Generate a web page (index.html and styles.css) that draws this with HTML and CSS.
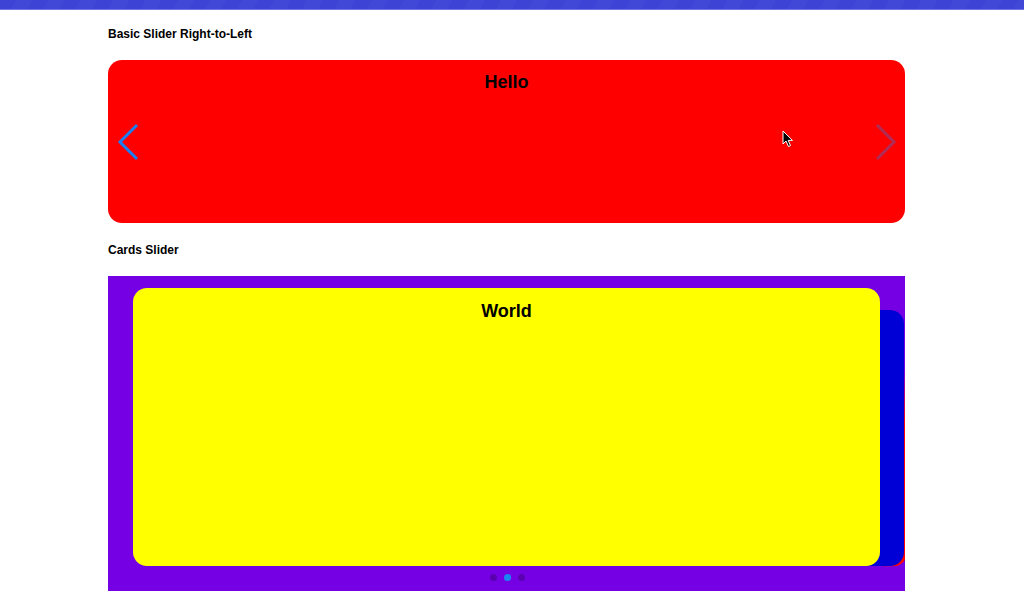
FILE: index.html
```html
<!DOCTYPE html>
<html>
<head>
<meta charset="utf-8">
<link rel="stylesheet" href="styles.css">
</head>
<body>
<div class="topbar"></div>
<main class="page">
  <h3 class="title">Basic Slider Right-to-Left</h3>
  <section class="slider basic">
    <h2 class="slide-text">Hello</h2>
    <svg class="arrow prev" width="24" height="40" viewBox="0 0 24 40"><polyline points="20,2 3,19 20,36" fill="none" stroke="#1a7ff2" stroke-width="3"/></svg>
    <svg class="arrow next" width="24" height="40" viewBox="0 0 24 40"><polyline points="3,2 20,19 3,36" fill="none" stroke="#1a7ff2" stroke-width="3"/></svg>
    <svg class="cursor" width="14" height="18" viewBox="0 0 14 18"><path d="M1,1 L1,14 L4,11 L6.5,16.5 L8.5,15.6 L6.2,10.4 L10.5,10.4 Z" fill="#000" stroke="#fff" stroke-width="1"/></svg>
  </section>
  <h3 class="title second">Cards Slider</h3>
  <section class="cards">
    <div class="card back red"></div>
    <div class="card back blue"></div>
    <div class="card front">
      <h2 class="slide-text">World</h2>
    </div>
    <div class="dots">
      <span class="dot"></span>
      <span class="dot active"></span>
      <span class="dot"></span>
    </div>
  </section>
</main>
</body>
</html>
```
FILE: styles.css
```css
html, body {
  margin: 0;
  padding: 0;
  background: #fff;
  font-family: "Liberation Sans", Arial, sans-serif;
  color: #000;
  overflow: hidden;
}
.topbar {
  height: 9px;
  border-bottom: 1px solid #7075e6;
  background: repeating-linear-gradient(120deg, #3c43d5 0, #3c43d5 14px, #4148d8 14px, #4148d8 28px);
}
.page {
  width: 797px;
  margin-left: 108px;
}
.title {
  margin: 16px 0 18px;
  font-size: 12px;
  line-height: 16px;
  font-weight: bold;
}
.title.second {
  margin: 19px 0 18px;
}
.slider {
  position: relative;
  height: 163px;
  background: #ff0000;
  border-radius: 14px;
  padding-top: 11px;
  box-sizing: border-box;
}
.slide-text {
  margin: 0;
  text-align: center;
  font-size: 18px;
  line-height: 22px;
  font-weight: bold;
}
.arrow {
  position: absolute;
  top: 63px;
}
.arrow.prev { left: 9px; }
.arrow.next { right: 7px; opacity: 0.35; }
.cursor {
  position: absolute;
  left: 674px;
  top: 70px;
}
.cards {
  position: relative;
  height: 315px;
  background: #7600e4;
  padding: 12px 25px 0;
  box-sizing: border-box;
  overflow: hidden;
}
.card {
  border-radius: 14px;
}
.card.front {
  position: relative;
  height: 278px;
  background: #ffff00;
  padding-top: 12px;
  box-sizing: border-box;
}
.card.back {
  position: absolute;
}
.card.blue {
  left: 100px;
  right: 1px;
  top: 34px;
  height: 256px;
  background: #0000d6;
}
.card.red {
  left: 760px;
  right: 2px;
  top: 34px;
  height: 256px;
  background: #ff0000;
  transform: rotate(-1deg);
  transform-origin: 100% 0;
}
.dots {
  position: relative;
  display: flex;
  justify-content: center;
  align-items: center;
  gap: 7px;
  height: 22px;
  padding-left: 1px;
}
.dot {
  width: 7px;
  height: 7px;
  border-radius: 50%;
  background: #5a00b0;
}
.dot.active {
  background: #1a86f0;
}
```
